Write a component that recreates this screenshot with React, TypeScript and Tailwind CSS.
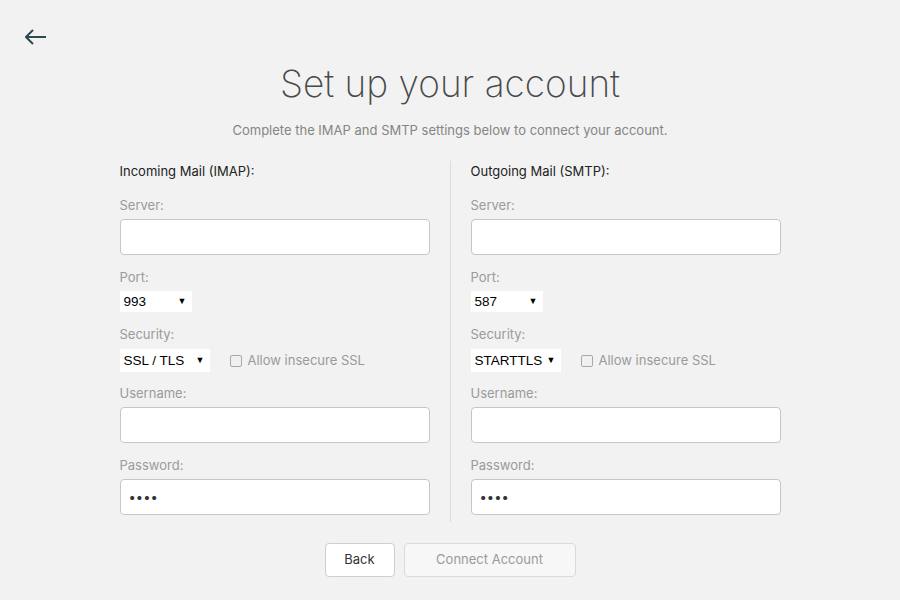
import { useState } from "react";

function Field({ label, password }: { label: string; password?: boolean }) {
  return (
    <>
      <label className="mt-[12px] block text-[13px] leading-[20px] text-[#9a9a9a]">{label}</label>
      <input
        type={password ? "password" : "text"}
        defaultValue={password ? "abcd" : ""}
        className="mt-[4px] h-[36px] w-[310px] rounded-[4px] border border-[#c6c6c6] bg-white px-[8px] text-[13px] text-[#333] outline-none"
      />
    </>
  );
}

function FakeSelect({ value, width }: { value: string; width: string }) {
  return (
    <div
      className={`flex items-center justify-between bg-white pl-[4px] pr-[5px] pt-[1px] font-['Liberation_Sans',sans-serif] text-[13.5px] text-black ${width}`}
    >
      <span>{value}</span>
      <span className="text-[9px]">▼</span>
    </div>
  );
}

function Column({
  title,
  port,
  security,
  className,
}: {
  title: string;
  port: string;
  security: string;
  className: string;
}) {
  const [insecure, setInsecure] = useState(false);
  return (
    <div className={`flex flex-col ${className}`}>
      <h2 className="text-[13px] leading-[20px] text-[#222]">{title}</h2>
      <label className="mt-[14px] block text-[13px] leading-[20px] text-[#9a9a9a]">Server:</label>
      <input className="mt-[4px] h-[36px] w-[310px] rounded-[4px] border border-[#c6c6c6] bg-white px-[8px] text-[13px] outline-none" />
      <label className="mt-[12px] block text-[13px] leading-[20px] text-[#9a9a9a]">Port:</label>
      <div className="mt-[4px] flex h-[21px]">
        <FakeSelect value={port} width="w-[72px]" />
      </div>
      <label className="mt-[12px] block text-[13px] leading-[20px] text-[#9a9a9a]">Security:</label>
      <div className="mt-[5px] flex h-[23px] items-center">
        <div className="flex h-full">
          <FakeSelect value={security} width="w-[90px]" />
        </div>
        <button
          onClick={() => setInsecure(!insecure)}
          className="ml-[20px] flex items-center gap-[6px] text-[13px] text-[#9a9a9a]"
        >
          <span className="h-[12px] w-[12px] rounded-[2px] border border-[#a8a8a8] bg-[#f0f0f0]" />
          Allow insecure SSL
        </button>
      </div>
      <div className="-mt-[1px]" />
      <Field label="Username:" />
      <Field label="Password:" password />
    </div>
  );
}

export default function App() {
  return (
    <div className="min-h-screen bg-[#f2f2f2] font-['Inter',sans-serif]">
      <div className="pl-[25px] pt-[29px]">
        <button className="block text-[#2c4a50]">
          <svg width="21" height="16" viewBox="0 0 21 16" fill="none" stroke="currentColor" strokeWidth="2">
            <path d="M1 8h20M8 1 1 8l7 7" />
          </svg>
        </button>
      </div>
      <h1 className="mt-[15px] text-center text-[37px] font-extralight leading-[48px] text-[#47494b]">
        Set up your account
      </h1>
      <p className="mt-[12px] text-center text-[13px] leading-[20px] text-[#858585]">
        Complete the IMAP and SMTP settings below to connect your account.
      </p>
      <div className="mt-[21px] flex justify-center">
        <div className="flex">
          <Column
            title="Incoming Mail (IMAP):"
            port="993"
            security="SSL / TLS"
            className="w-[331px] border-r border-[#dcdcdc] pb-[7px] pr-[20px]"
          />
          <Column
            title="Outgoing Mail (SMTP):"
            port="587"
            security="STARTTLS"
            className="w-[330px] pl-[20px]"
          />
        </div>
      </div>
      <div className="mt-[21px] flex justify-center gap-[9px]">
        <button className="h-[34px] w-[70px] rounded-[4px] border border-[#cfcfcf] bg-white text-[13px] text-[#333]">
          Back
        </button>
        <button className="h-[34px] w-[172px] rounded-[4px] border border-[#dadada] bg-[#f7f7f7] text-[13px] text-[#9a9a9a]">
          Connect Account
        </button>
      </div>
    </div>
  );
}
